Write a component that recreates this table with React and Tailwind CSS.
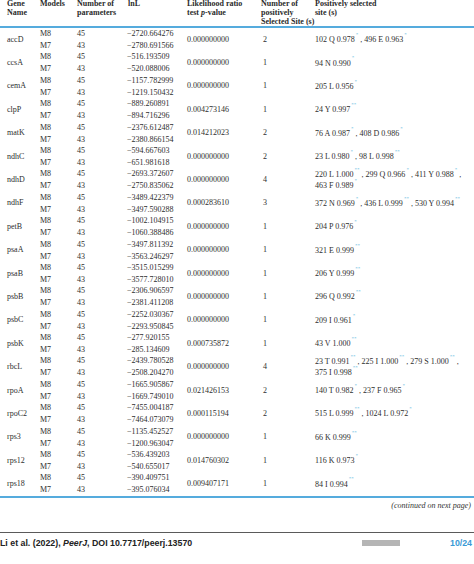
import React from "react";

const rows = [
  ["accD", "−2720.664276", "−2780.691566", "0.000000000", "2", [[["102 Q 0.978", "*"], ["496 E 0.963", "*"]]]],
  ["ccsA", "−516.193509", "−520.088006", "0.000000000", "1", [[["94 N 0.990", "*"]]]],
  ["cemA", "−1157.782999", "−1219.150432", "0.000000000", "1", [[["205 L 0.956", "*"]]]],
  ["clpP", "−889.260891", "−894.716296", "0.004273146", "1", [[["24 Y 0.997", "**"]]]],
  ["matK", "−2376.612487", "−2380.866154", "0.014212023", "2", [[["76 A 0.987", "*"], ["408 D 0.986", "*"]]]],
  ["ndhC", "−594.667603", "−651.981618", "0.000000000", "2", [[["23 L 0.980", "*"], ["98 L 0.998", "**"]]]],
  ["ndhD", "−2693.372607", "−2750.835062", "0.000000000", "4", [[["220 L 1.000", "**"], ["299 Q 0.966", "*"], ["411 Y 0.988", "*"]], [["463 F 0.989", "*"]]], true],
  ["ndhF", "−3489.422379", "−3497.590288", "0.000283610", "3", [[["372 N 0.969", "*"], ["436 L 0.999", "**"], ["530 Y 0.994", "**"]]]],
  ["petB", "−1002.104915", "−1060.388486", "0.000000000", "1", [[["204 P 0.976", "*"]]]],
  ["psaA", "−3497.811392", "−3563.246297", "0.000000000", "1", [[["321 E 0.999", "**"]]]],
  ["psaB", "−3515.015299", "−3577.728010", "0.000000000", "1", [[["206 Y 0.999", "**"]]]],
  ["psbB", "−2306.906597", "−2381.411208", "0.000000000", "1", [[["296 Q 0.992", "**"]]]],
  ["psbC", "−2252.030367", "−2293.950845", "0.000000000", "1", [[["209 I 0.961", "*"]]]],
  ["psbK", "−277.920155", "−285.134609", "0.000735872", "1", [[["43 V 1.000", "**"]]]],
  ["rbcL", "−2439.780528", "−2508.204270", "0.000000000", "4", [[["23 T 0.991", "**"], ["225 I 1.000", "**"], ["279 S 1.000", "**"]], [["375 I 0.998", "**"]]], true],
  ["rpoA", "−1665.905867", "−1669.749010", "0.021426153", "2", [[["140 T 0.982", "*"], ["237 F 0.965", "*"]]]],
  ["rpoC2", "−7455.004187", "−7464.073079", "0.000115194", "2", [[["515 L 0.999", "**"], ["1024 L 0.972", "*"]]]],
  ["rps3", "−1135.452527", "−1200.963047", "0.000000000", "1", [[["66 K 0.999", "**"]]]],
  ["rps12", "−536.439203", "−540.655017", "0.014760302", "1", [[["116 K 0.973", "*"]]]],
  ["rps18", "−390.409751", "−395.076034", "0.009407171", "1", [[["84 I 0.994", "**"]]]],
];

function SiteLine({ items, trailingComma }) {
  return (
    <div>
      {items.map((it, i) => (
        <span key={i}>
          {it[0]}
          <sup className="text-[5px] text-[#5bb8e0] align-super ml-[1px]">{it[1]}</sup>
          {i < items.length - 1 ? " , " : ""}
        </span>
      ))}
      {trailingComma ? " ," : ""}
    </div>
  );
}

function Header() {
  return (
    <div className="h-[26px] flex font-bold text-[8px] leading-[9px] text-[#2b2b2b]">
      <div className="w-[40px] pl-[7px] -mt-[1px]">Gene<br />Name</div>
      <div className="w-[37px] -mt-[1px]">Models</div>
      <div className="w-[50px] -mt-[1px]">Number of<br />parameters</div>
      <div className="w-[60px] pl-[1px] -mt-[1px]">lnL</div>
      <div className="w-[74px] -mt-[1px]">Likelihood ratio<br />test <i>p</i>-value</div>
      <div className="w-[54px] -mt-[1px]">Number of<br />positively<br />Selected Site (s)</div>
      <div className="flex-1 -mt-[1px]">Positively selected<br />site (s)</div>
    </div>
  );
}

function Group({ r }) {
  const [gene, l1, l2, p, n, sites, multi] = r;
  return (
    <div className="h-[23.4px] flex text-[8px] text-[#2e2e2e]">
      <div className="w-[40px] pl-[7px] flex items-center">{gene}</div>
      <div className="w-[37px] flex flex-col justify-around">
        <div>M8</div>
        <div>M7</div>
      </div>
      <div className="w-[50px] flex flex-col justify-around">
        <div>45</div>
        <div>43</div>
      </div>
      <div className="w-[60px] flex flex-col justify-around">
        <div>{l1}</div>
        <div>{l2}</div>
      </div>
      <div className="w-[74px] flex items-center">{p}</div>
      <div className="w-[54px] pl-[2px] flex items-center">{n}</div>
      <div className="flex-1 flex flex-col justify-center leading-[11px]">
        {sites.map((line, i) => (
          <SiteLine key={i} items={line} trailingComma={multi && i === 0} />
        ))}
      </div>
    </div>
  );
}

export default function App() {
  return (
    <div
      className="w-[474px] h-[564px] bg-white overflow-hidden flex flex-col"
      style={{ fontFamily: '"Liberation Serif", "Times New Roman", serif' }}
    >
      <Header />
      <div className="h-[2px] bg-[#55abdd]" />
      <div className="flex flex-col">
        {rows.map((r) => (
          <Group key={r[0]} r={r} />
        ))}
      </div>
      <div className="h-[2px] bg-[#55abdd]" />
      <div className="text-right italic text-[8px] leading-[10px] pr-[3px] mt-[3px] text-[#333]">
        (continued on next page)
      </div>
      <div className="h-[1.5px] bg-[#5a5a5a] mt-[21px]" />
      <div
        className="flex items-center h-[14px] mt-[3px] text-[8.8px] text-[#222]"
        style={{ fontFamily: '"Liberation Sans", Arial, sans-serif' }}
      >
        <div className="w-[362px] font-semibold">
          Li et al. (2022), <i>PeerJ</i>, DOI 10.7717/peerj.13570
        </div>
        <div className="w-[38px] h-[6px] bg-[#b5b5b5]" />
        <div className="w-[74px] text-right pr-[2px] text-[#3a9ad6] font-semibold">10/24</div>
      </div>
    </div>
  );
}
